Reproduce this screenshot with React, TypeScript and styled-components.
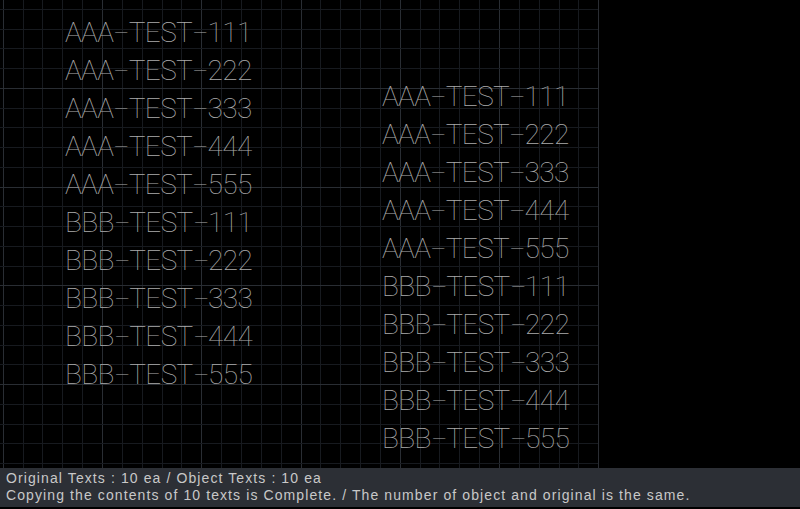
import styled, { createGlobalStyle } from "styled-components";

const GlobalStyle = createGlobalStyle`
  html, body {
    margin: 0;
    padding: 0;
    background: #000;
  }
`;

const Screen = styled.div`
  width: 800px;
  height: 509px;
  background: #000;
  display: flex;
  flex-direction: column;
  overflow: hidden;
`;

const Viewport = styled.div`
  position: relative;
  height: 468px;
  display: flex;
  align-items: flex-start;
`;

const GridLayer = styled.svg`
  position: absolute;
  left: 0;
  top: 0;
  width: 600px;
  height: 468px;
  shape-rendering: crispEdges;
`;

const TextColumn = styled.div<{ $left: number; $top: number; $width: number }>`
  position: relative;
  margin-left: ${(p) => p.$left}px;
  padding-top: ${(p) => p.$top}px;
  width: ${(p) => p.$width}px;
  display: flex;
  flex-direction: column;
`;

const CadText = styled.div`
  font-family: Roboto, "DejaVu Sans", sans-serif;
  font-weight: 100;
  font-size: 28px;
  line-height: 38px;
  height: 38px;
  letter-spacing: -0.6px;
  color: #ababab;
  white-space: nowrap;
`;

// the CAD font draws its hyphen about twice as wide as a normal one
const Dash = styled.span`
  display: inline-block;
  transform: scaleX(1.9);
  margin: 0 3.8px;
`;

const StatusBar = styled.div`
  height: 39px;
  background: #2c2f35;
  padding: 2px 6px 0;
  box-sizing: border-box;
  font-family: "Liberation Sans", Arial, sans-serif;
  font-size: 14px;
  line-height: 17px;
  letter-spacing: 1.1px;
  color: #c8c8c8;
`;

const StatusLine = styled.div`
  white-space: nowrap;
`;

const texts = [
  "AAA-TEST-111",
  "AAA-TEST-222",
  "AAA-TEST-333",
  "AAA-TEST-444",
  "AAA-TEST-555",
  "BBB-TEST-111",
  "BBB-TEST-222",
  "BBB-TEST-333",
  "BBB-TEST-444",
  "BBB-TEST-555",
];

function Label({ text }: { text: string }) {
  const parts = text.split("-");
  return (
    <CadText>
      {parts.map((p, i) => (
        <span key={i}>
          {i > 0 && <Dash>-</Dash>}
          {p}
        </span>
      ))}
    </CadText>
  );
}

function Grid() {
  const xs: { v: number; major: boolean }[] = [];
  for (let k = -5; k <= 24; k++) {
    xs.push({ v: Math.round(102 + k * 19.85) + 0.5, major: k % 5 === 0 });
  }
  const ys: { v: number; major: boolean }[] = [];
  for (let k = -19; k <= 4; k++) {
    ys.push({ v: Math.round(384 + k * 19.75) + 0.5, major: k % 5 === 0 });
  }
  const minor = "#171a1f";
  const major = "#292d33";
  return (
    <GridLayer viewBox="0 0 600 468">
      {xs.map((l, i) => (
        <line key={"x" + i} x1={l.v} y1={0} x2={l.v} y2={468} stroke={l.major ? major : minor} strokeWidth={1} />
      ))}
      {ys.map((l, i) => (
        <line key={"y" + i} x1={0} y1={l.v} x2={598} y2={l.v} stroke={l.major ? major : minor} strokeWidth={1} />
      ))}
      <line x1={598.5} y1={0} x2={598.5} y2={468} stroke="#2a2d33" strokeWidth={1} />
    </GridLayer>
  );
}

export default function App() {
  return (
    <>
      <GlobalStyle />
      <Screen>
        <Viewport>
          <Grid />
          <TextColumn $left={65} $top={14} $width={210}>
            {texts.map((t) => (
              <Label key={t} text={t} />
            ))}
          </TextColumn>
          <TextColumn $left={107} $top={78} $width={210}>
            {texts.map((t) => (
              <Label key={t} text={t} />
            ))}
          </TextColumn>
        </Viewport>
        <StatusBar>
          <StatusLine>Original Texts : 10 ea / Object Texts : 10 ea</StatusLine>
          <StatusLine>
            Copying the contents of 10 texts is Complete. / The number of object and original is the same.
          </StatusLine>
        </StatusBar>
      </Screen>
    </>
  );
}
